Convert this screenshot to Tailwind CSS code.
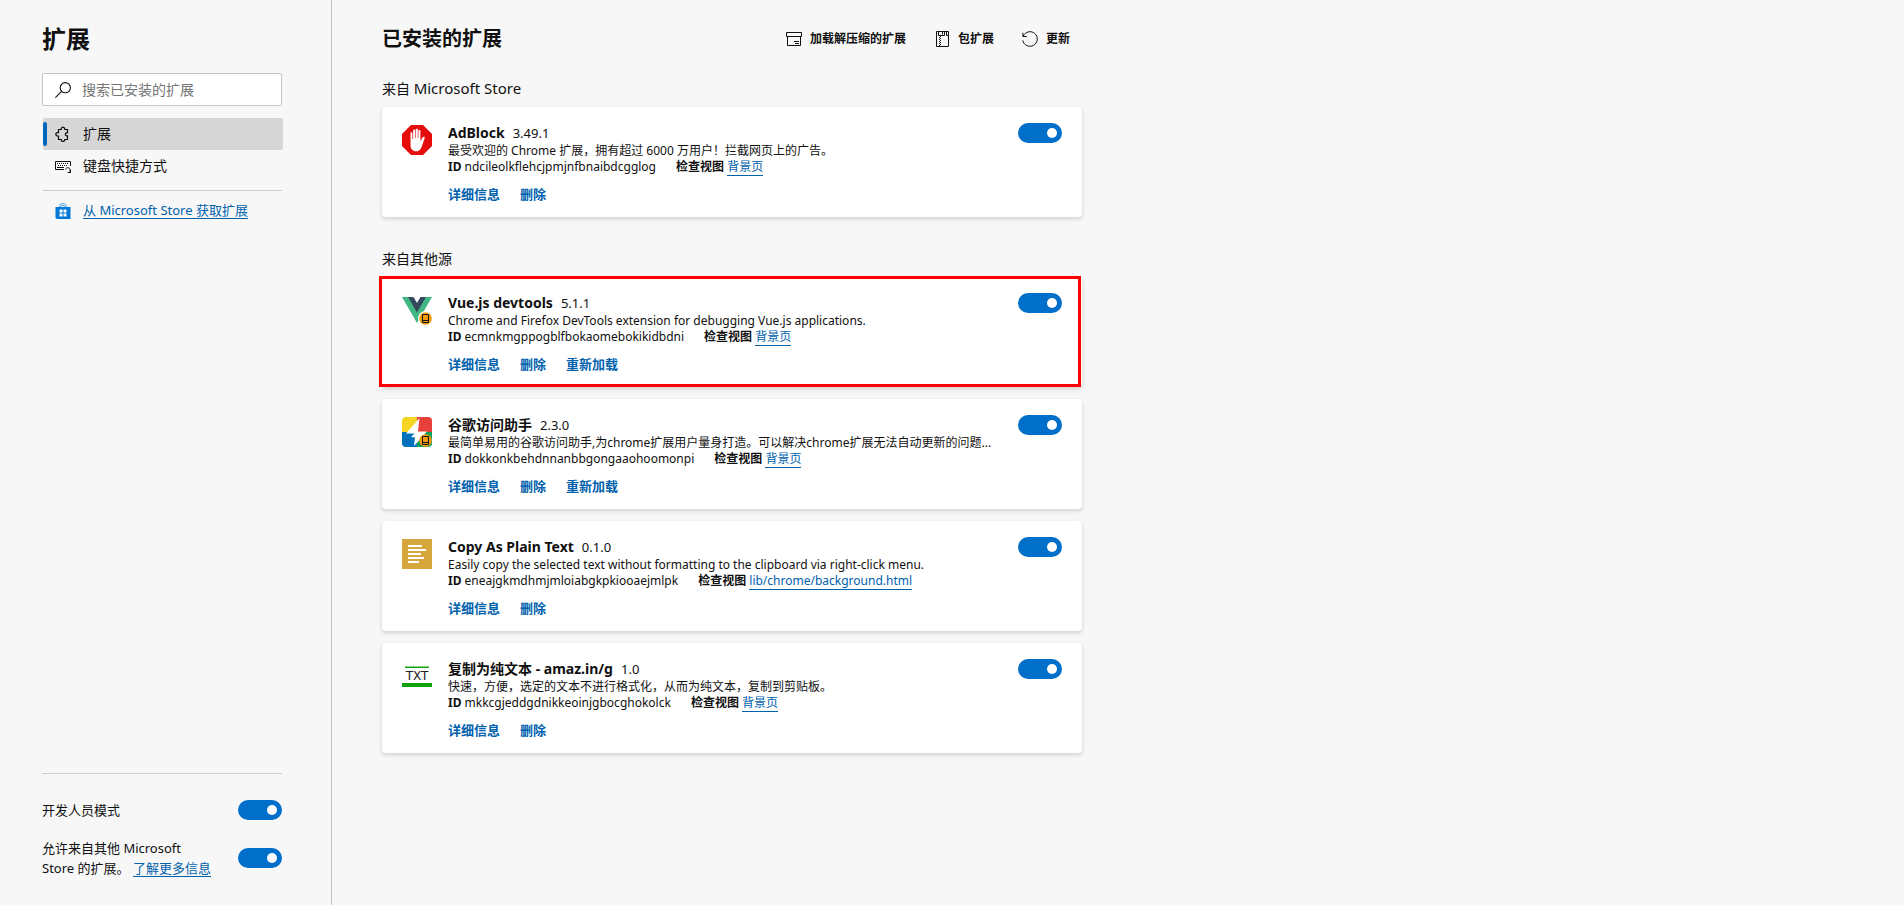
<!DOCTYPE html>
<html lang="zh-CN">
<head>
    <meta charset="UTF-8">
    <meta name="viewport" content="width=device-width, initial-scale=1.0">
    <title>扩展</title>
    <script src="https://cdn.jsdelivr.net/npm/@tailwindcss/browser@4"></script>
</head>
<body class="bg-[#f7f7f7] text-[#101010] font-['Noto_Sans','Noto_Sans_CJK_SC',sans-serif]">
    <div class="flex min-h-screen">
        <!-- Sidebar -->
        <aside class="w-[332px] shrink-0 border-r border-[#c5c5c5] pl-[42px] pr-[49px] pt-[19px] pb-[27px] flex flex-col">
            <h1 class="h-10 flex items-center text-2xl font-bold">扩展</h1>

            <label class="mt-[14px] h-[33px] flex items-center gap-[11px] pl-3 bg-white border border-[#c5c5c5] rounded-xs">
                <svg class="w-4 h-4 shrink-0" viewBox="0 0 16 16" fill="none" stroke="#101010" stroke-width="1.1">
                    <circle cx="10.3" cy="5.7" r="5.1"/>
                    <path d="M6.6 9.4L.4 15.6"/>
                </svg>
                <input type="text" aria-label="搜索已安装的扩展" placeholder="搜索已安装的扩展" class="flex-1 min-w-0 text-sm outline-none placeholder:text-[#757575]">
            </label>

            <nav class="mt-3 ml-px -mr-px text-sm">
                <a href="#" class="relative h-8 flex items-center gap-3 pl-3 bg-[#d6d6d6] rounded-xs">
                    <span class="absolute left-0 top-1 bottom-1 w-1 rounded-xs bg-[#0067b8]"></span>
                    <svg class="w-4 h-4" viewBox="0 0 16 16" fill="none" stroke="#101010" stroke-width="1.2">
                        <path d="M3.500 3.500H6.300V2.300L7.300 1.300h1.400l1 1v1.200h2.800v3.200h-1L10.400 7.700v1.200l1.100 1h1v3.600H9.700v.9l-1 1H7.300l-1-1v-.9H3.500V10H2L.9 8.900V7.600l1.100-1h1.500z"/>
                    </svg>
                    扩展
                </a>
                <a href="#" class="h-8 flex items-center gap-3 pl-3">
                    <svg class="w-4 h-4" viewBox="0 0 16 16" fill="none" stroke="#101010">
                        <path d="M9 11.500H.5v-8h15V8"/>
                        <path d="M2 5.500h12M3 7.500h10" stroke-dasharray="1 1"/>
                        <path d="M2 9.500h7"/>
                        <path d="M10.500 11.500c.7-2.600 4.600-2.400 4.600.5v3M12.700 14.500h2.800V11.800"/>
                    </svg>
                    键盘快捷方式
                </a>
            </nav>

            <div class="mt-2 ml-px h-10 border-t border-[#cdcdcd] flex items-center gap-3 pl-3 text-[13px] text-[#0061ad]">
                <svg class="w-4 h-4" viewBox="0 0 16 16">
                    <path d="M4.500 4V3.200a3.300 2.600 0 0 1 6.800 0V4M6 4V3.500C6 2 9.800 2 9.800 3.500V4" fill="none" stroke="#2f8fdd" stroke-width=".8"/>
                    <path fill="#0078d7" d="M.5 4h15v12H1.800L.5 14.800z"/>
                    <path fill="#fff" d="M4.500 6.500h3v3h-3zM8.500 6.500h3v3h-3zM4.500 10.500h3v3h-3zM8.500 10.500h3v3h-3z"/>
                </svg>
                <a href="#" class="leading-4 border-b border-[#0061ad]">从 Microsoft Store 获取扩展</a>
            </div>

            <!-- Bottom settings -->
            <div class="mt-auto pt-[26px] border-t border-[#cdcdcd] text-[13px] leading-5">
                <div class="flex items-center justify-between">
                    <label for="devMode">开发人员模式</label>
                    <input id="devMode" type="checkbox" role="switch" checked class="appearance-none w-11 h-5 shrink-0 rounded-full bg-[#b0b0b0] checked:bg-[#006fc9] flex items-center pl-[5px] checked:pl-[29px] before:w-[10px] before:h-[10px] before:rounded-full before:bg-white">
                </div>
                <div class="mt-[18px] flex items-center justify-between">
                    <div>
                        <label for="otherStores">允许来自其他 Microsoft<br>Store 的扩展。</label>
                        <a href="#" class="inline-block leading-4 text-[#0061ad] border-b border-[#0061ad]">了解更多信息</a>
                    </div>
                    <input id="otherStores" type="checkbox" role="switch" checked class="appearance-none w-11 h-5 shrink-0 rounded-full bg-[#b0b0b0] checked:bg-[#006fc9] flex items-center pl-[5px] checked:pl-[29px] before:w-[10px] before:h-[10px] before:rounded-full before:bg-white">
                </div>
            </div>
        </aside>

        <!-- Main -->
        <main class="flex-1 min-w-0 pl-[50px] pr-6 pt-[19px] pb-8">
            <div class="max-w-[700px]">
                <div class="h-10 flex items-center justify-between">
                    <h2 class="text-xl font-bold">已安装的扩展</h2>
                    <div class="flex gap-7 pr-3 text-xs font-semibold">
                        <button class="flex items-center gap-2">
                            <svg class="w-4 h-4" viewBox="0 0 16 16" fill="none" stroke="#101010">
                                <path d="M.5 1.500h15v4H.5zM1.500 5.500v9h13v-9M8 10.500h5M9 12.500h4"/>
                            </svg>
                            加载解压缩的扩展
                        </button>
                        <button class="flex items-center gap-2">
                            <svg class="w-4 h-4" viewBox="0 0 16 16" fill="none" stroke="#101010">
                                <path d="M2.500.5h12v15h-12zM4.500.5v4h6v-4M12.500.5v4h2M8.500.5v3"/>
                                <path d="M6.500 5v10M5.500 6v9" stroke-dasharray="1 1"/>
                            </svg>
                            包扩展
                        </button>
                        <button class="flex items-center gap-2">
                            <svg class="w-4 h-4" viewBox="0 0 16 16" fill="none" stroke="#101010">
                                <path d="M1.300 5A7.300 7.300 0 1 1 .8 9.400M.9 1.800v3.700h4"/>
                            </svg>
                            更新
                        </button>
                    </div>
                </div>

                <!-- Microsoft Store -->
                <h3 class="h-5 mt-5 mb-2 text-sm leading-5">来自 <span class="text-[15px] leading-4">Microsoft Store</span></h3>
                <article class="bg-white rounded-sm shadow-[0_2px_4px_rgba(0,0,0,0.16)] pl-5 pr-5 pt-4 pb-[13px] flex">
                    <svg class="w-[30px] h-[30px] mt-[2px] shrink-0" viewBox="0 0 30 30">
                        <path fill="#e60c0c" d="M9 0h12l9 9v12l-9 9H9l-9-9V9z"/>
                        <path fill="#fff" d="M8.500 8.300c0-1.300 1.900-1.300 1.900 0V14h.7V5.500c0-1.400 2-1.400 2 0V13h.6V4.700c0-1.400 2.100-1.400 2.100 0V13h.6V6c0-1.400 2-1.400 2 0v10.200l2-3.600c.8-1.300 2.900-1 2.300.6-1.700 4.300-2.400 7.600-3.900 10.300-1.300 2.400-3 2.800-4.700 2.800-3.300 0-5.600-2.200-5.600-6z"/>
                    </svg>
                    <div class="ml-4 flex-1 min-w-0 text-xs leading-4">
                        <div class="flex gap-2 leading-5">
                            <h4 class="text-sm leading-5 font-bold">AdBlock</h4>
                            <span class="text-[13px]">3.49.1</span>
                        </div>
                        <p class="truncate">最受欢迎的 Chrome 扩展，拥有超过 6000 万用户！拦截网页上的广告。</p>
                        <div class="h-4 flex gap-5">
                            <span><b>ID</b> ndcileolkflehcjpmjnfbnaibdcgglog</span>
                            <span><b>检查视图</b> <a href="#" class="inline-block text-[#0061ad] border-b border-[#0061ad]">背景页</a></span>
                        </div>
                        <div class="mt-[9px] flex gap-5 text-[13px] leading-5 font-semibold text-[#0061ad]">
                            <button>详细信息</button>
                            <button>删除</button>
                        </div>
                    </div>
                    <input type="checkbox" role="switch" aria-label="AdBlock" checked class="appearance-none w-11 h-5 ml-6 shrink-0 rounded-full bg-[#b0b0b0] checked:bg-[#006fc9] flex items-center pl-[5px] checked:pl-[29px] before:w-[10px] before:h-[10px] before:rounded-full before:bg-white">
                </article>

                <!-- Other sources -->
                <h3 class="h-5 mt-8 mb-2 text-sm leading-5">来自其他源</h3>
                <div class="flex flex-col gap-3">
                    <article class="relative bg-white rounded-sm shadow-[0_2px_4px_rgba(0,0,0,0.16)] pl-5 pr-5 pt-4 pb-[13px] flex">
                        <!-- highlight frame -->
                        <div class="absolute -left-[3px] right-px -top-px bottom-0 border-3 border-[#ff0000] pointer-events-none"></div>
                        <svg class="w-[30px] h-[30px] mt-[2px] shrink-0" viewBox="0 0 30 30">
                            <path fill="#41b883" d="M0 2h30L15 28z"/>
                            <path fill="#35495e" d="M6 2h18l-9 15.500z"/>
                            <path fill="#fff" d="M11.500 2h7L15 8z"/>
                            <circle cx="23.500" cy="23.500" r="7.500" fill="#fff"/>
                            <circle cx="23.500" cy="23.500" r="6.300" fill="#f59b0b"/>
                            <path fill="none" stroke="#111" d="M20.500 19.500h6v8h-6zM20.500 25.500h6"/>
                        </svg>
                        <div class="ml-4 flex-1 min-w-0 text-xs leading-4">
                            <div class="flex gap-2 leading-5">
                                <h4 class="text-sm leading-5 font-bold">Vue.js devtools</h4>
                                <span class="text-[13px]">5.1.1</span>
                            </div>
                            <p class="truncate">Chrome and Firefox DevTools extension for debugging Vue.js applications.</p>
                            <div class="h-4 flex gap-5">
                                <span><b>ID</b> ecmnkmgppogblfbokaomebokikidbdni</span>
                                <span><b>检查视图</b> <a href="#" class="inline-block text-[#0061ad] border-b border-[#0061ad]">背景页</a></span>
                            </div>
                            <div class="mt-[9px] flex gap-5 text-[13px] leading-5 font-semibold text-[#0061ad]">
                                <button>详细信息</button>
                                <button>删除</button>
                                <button>重新加载</button>
                            </div>
                        </div>
                        <input type="checkbox" role="switch" aria-label="Vue.js devtools" checked class="appearance-none w-11 h-5 ml-6 shrink-0 rounded-full bg-[#b0b0b0] checked:bg-[#006fc9] flex items-center pl-[5px] checked:pl-[29px] before:w-[10px] before:h-[10px] before:rounded-full before:bg-white">
                    </article>

                    <article class="bg-white rounded-sm shadow-[0_2px_4px_rgba(0,0,0,0.16)] pl-5 pr-5 pt-4 pb-[13px] flex">
                        <svg class="w-[30px] h-[30px] mt-[2px] shrink-0 rounded-sm" viewBox="0 0 30 30">
                            <path fill="#f5d423" d="M0 0h15v15H0z"/>
                            <path fill="#e8403a" d="M15 0h15v15H15z"/>
                            <path fill="#0071bc" d="M0 15h15v15H0z"/>
                            <path fill="#0da058" d="M15 15h15v15H15z"/>
                            <path fill="#fff" d="M17.500 1L4 16.500h8.500L9 20l4 .5L12 29l13-14.500h-9z"/>
                            <circle cx="23.500" cy="23.500" r="6.300" fill="#f59b0b"/>
                            <path fill="none" stroke="#111" d="M20.500 19.500h6v8h-6zM20.500 25.500h6"/>
                        </svg>
                        <div class="ml-4 flex-1 min-w-0 text-xs leading-4">
                            <div class="flex gap-2 leading-5">
                                <h4 class="text-sm leading-5 font-bold">谷歌访问助手</h4>
                                <span class="text-[13px]">2.3.0</span>
                            </div>
                            <p class="truncate">最简单易用的谷歌访问助手,为chrome扩展用户量身打造。可以解决chrome扩展无法自动更新的问题...</p>
                            <div class="h-4 flex gap-5">
                                <span><b>ID</b> dokkonkbehdnnanbbgongaaohoomonpi</span>
                                <span><b>检查视图</b> <a href="#" class="inline-block text-[#0061ad] border-b border-[#0061ad]">背景页</a></span>
                            </div>
                            <div class="mt-[9px] flex gap-5 text-[13px] leading-5 font-semibold text-[#0061ad]">
                                <button>详细信息</button>
                                <button>删除</button>
                                <button>重新加载</button>
                            </div>
                        </div>
                        <input type="checkbox" role="switch" aria-label="谷歌访问助手" checked class="appearance-none w-11 h-5 ml-6 shrink-0 rounded-full bg-[#b0b0b0] checked:bg-[#006fc9] flex items-center pl-[5px] checked:pl-[29px] before:w-[10px] before:h-[10px] before:rounded-full before:bg-white">
                    </article>

                    <article class="bg-white rounded-sm shadow-[0_2px_4px_rgba(0,0,0,0.16)] pl-5 pr-5 pt-4 pb-[13px] flex">
                        <svg class="w-[30px] h-[30px] mt-[2px] shrink-0" viewBox="0 0 30 30">
                            <path fill="#d6a73c" d="M0 0h30v30H0z"/>
                            <path stroke="#fff" stroke-width="2" d="M6 7h14M6 11h18M6 15h13M6 19h16M6 23h11"/>
                        </svg>
                        <div class="ml-4 flex-1 min-w-0 text-xs leading-4">
                            <div class="flex gap-2 leading-5">
                                <h4 class="text-sm leading-5 font-bold">Copy As Plain Text</h4>
                                <span class="text-[13px]">0.1.0</span>
                            </div>
                            <p class="truncate">Easily copy the selected text without formatting to the clipboard via right-click menu.</p>
                            <div class="h-4 flex gap-5">
                                <span><b>ID</b> eneajgkmdhmjmloiabgkpkiooaejmlpk</span>
                                <span><b>检查视图</b> <a href="#" class="inline-block text-[#0061ad] border-b border-[#0061ad]">lib/chrome/background.html</a></span>
                            </div>
                            <div class="mt-[9px] flex gap-5 text-[13px] leading-5 font-semibold text-[#0061ad]">
                                <button>详细信息</button>
                                <button>删除</button>
                            </div>
                        </div>
                        <input type="checkbox" role="switch" aria-label="Copy As Plain Text" checked class="appearance-none w-11 h-5 ml-6 shrink-0 rounded-full bg-[#b0b0b0] checked:bg-[#006fc9] flex items-center pl-[5px] checked:pl-[29px] before:w-[10px] before:h-[10px] before:rounded-full before:bg-white">
                    </article>

                    <article class="bg-white rounded-sm shadow-[0_2px_4px_rgba(0,0,0,0.16)] pl-5 pr-5 pt-4 pb-[13px] flex">
                        <svg class="w-[30px] h-[30px] mt-[2px] shrink-0" viewBox="0 0 30 30">
                            <path stroke="#8fd08a" d="M3 5.500h24"/>
                            <path stroke="#12a00c" d="M3 6.500h24"/>
                            <text x="15" y="19" text-anchor="middle" font-family="DejaVu Sans" font-size="12" fill="#222">TXT</text>
                            <path stroke="#12a00c" stroke-width="4" d="M0 24h30"/>
                        </svg>
                        <div class="ml-4 flex-1 min-w-0 text-xs leading-4">
                            <div class="flex gap-2 leading-5">
                                <h4 class="text-sm leading-5 font-bold">复制为纯文本 - amaz.in/g</h4>
                                <span class="text-[13px]">1.0</span>
                            </div>
                            <p class="truncate">快速，方便，选定的文本不进行格式化，从而为纯文本，复制到剪贴板。</p>
                            <div class="h-4 flex gap-5">
                                <span><b>ID</b> mkkcgjeddgdnikkeoinjgbocghokolck</span>
                                <span><b>检查视图</b> <a href="#" class="inline-block text-[#0061ad] border-b border-[#0061ad]">背景页</a></span>
                            </div>
                            <div class="mt-[9px] flex gap-5 text-[13px] leading-5 font-semibold text-[#0061ad]">
                                <button>详细信息</button>
                                <button>删除</button>
                            </div>
                        </div>
                        <input type="checkbox" role="switch" aria-label="复制为纯文本 - amaz.in/g" checked class="appearance-none w-11 h-5 ml-6 shrink-0 rounded-full bg-[#b0b0b0] checked:bg-[#006fc9] flex items-center pl-[5px] checked:pl-[29px] before:w-[10px] before:h-[10px] before:rounded-full before:bg-white">
                    </article>
                </div>
            </div>
        </main>
    </div>
</body>
</html>
